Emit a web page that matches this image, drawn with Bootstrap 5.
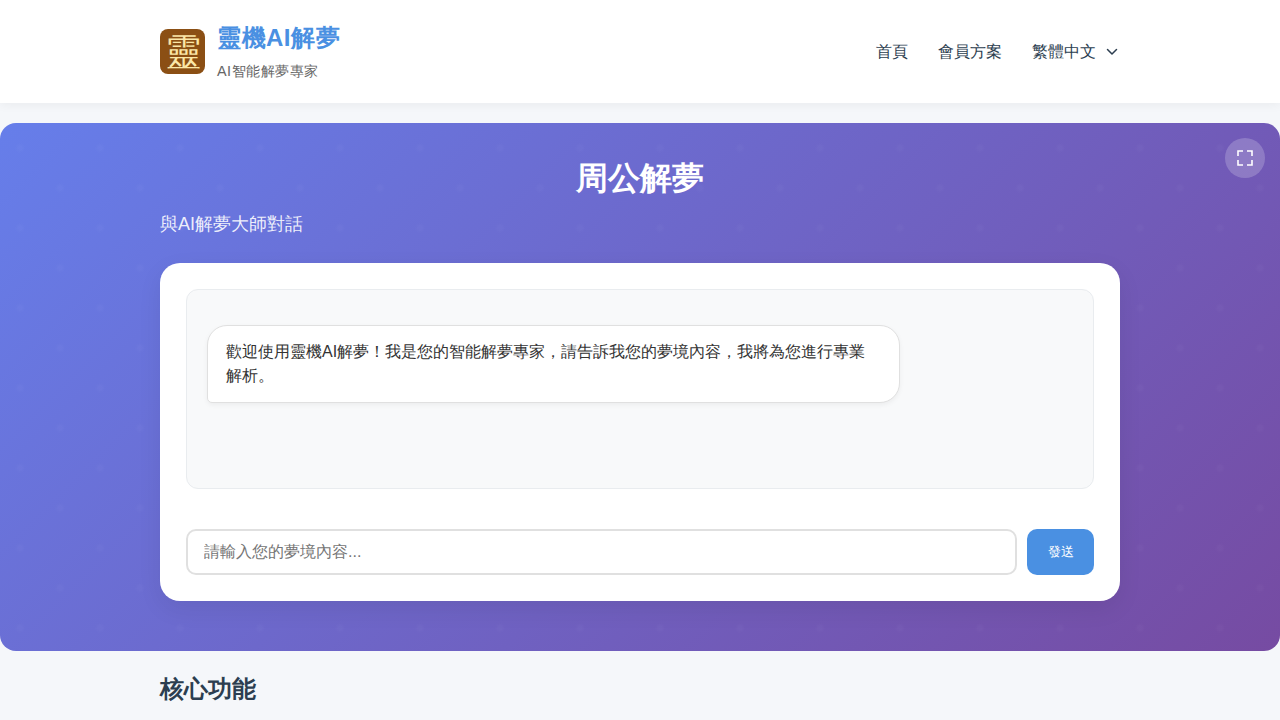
<!DOCTYPE html>
<html lang="zh-Hant">

<head>
    <meta charset="UTF-8" />
    <meta name="viewport" content="width=device-width, initial-scale=1.0" />
    <title>靈機AI解夢</title>
    <link href="https://cdn.jsdelivr.net/npm/bootstrap@5.3.0/dist/css/bootstrap.min.css" rel="stylesheet" />
    <style>
        body {
            background-color: #f5f7fa;
            color: #333333;
            font-family: "Liberation Sans", sans-serif;
            height: 720px;
            overflow: hidden;
        }

        .page-wrap {
            width: 960px;
            margin: 0 auto;
        }

        .site-header {
            height: 103px;
            background-color: #ffffff;
            box-shadow: 0 2px 10px rgba(0, 0, 0, 0.05);
            margin-bottom: 20px;
        }

        .logo-box {
            width: 45px;
            height: 45px;
            border-radius: 8px;
            background-color: #8b4f14;
            color: #fbe7a8;
            font-size: 36px;
            line-height: 45px;
            text-align: center;
        }

        .brand-text {
            padding-bottom: 2px;
        }

        .brand-name {
            color: #4a90e2;
            font-size: 24px;
            font-weight: 700;
            line-height: 36px;
            letter-spacing: 0.5px;
            margin-bottom: 4px;
        }

        .brand-sub {
            color: #666666;
            font-size: 14.4px;
            line-height: 22px;
            letter-spacing: 0.5px;
        }

        .top-link {
            color: #2c3e50;
            font-size: 16px;
            text-decoration: none;
        }

        .top-gap {
            margin-left: 30px;
        }

        .hero-panel {
            position: relative;
            height: 528px;
            border-radius: 16px;
            background-image:
                radial-gradient(circle at 20px 25px, rgba(255, 255, 255, 0.025) 0, rgba(255, 255, 255, 0.025) 2px, transparent 5px),
                radial-gradient(circle at 60px 65px, rgba(255, 255, 255, 0.025) 0, rgba(255, 255, 255, 0.025) 2px, transparent 5px),
                linear-gradient(135deg, #667eea 0%, #764ba2 100%);
            background-size: 80px 80px, 80px 80px, 100% 100%;
            padding-top: 32px;
            color: #ffffff;
        }

        .expand-btn {
            position: absolute;
            top: 15px;
            right: 15px;
            width: 40px;
            height: 40px;
            border: 0;
            border-radius: 50%;
            background-color: rgba(255, 255, 255, 0.2);
        }

        .hero-title {
            font-size: 32px;
            font-weight: 700;
            line-height: 46px;
            margin-bottom: 10px;
        }

        .hero-sub {
            font-size: 18px;
            line-height: 26px;
            color: rgba(255, 255, 255, 0.9);
            margin-bottom: 26px;
        }

        .chat-card {
            height: 338px;
            background-color: #ffffff;
            border-radius: 20px;
            padding: 26px;
            box-shadow: 0 8px 24px rgba(0, 0, 0, 0.07);
        }

        .chat-log {
            height: 200px;
            background-color: #f8f9fa;
            border: 1px solid #e9ecef;
            border-radius: 12px;
            padding: 35px 20px;
            margin-bottom: 40px;
        }

        .bot-bubble {
            width: 693px;
            height: 78px;
            background-color: #ffffff;
            color: #333333;
            border: 1px solid #e0e0e0;
            border-radius: 20px 20px 20px 5px;
            padding: 14px 18px;
            font-size: 16px;
            line-height: 24px;
            box-shadow: 0 2px 5px rgba(0, 0, 0, 0.05);
        }

        .dream-input {
            height: 46px;
            border: 2px solid #e0e0e0;
            border-radius: 10px;
            padding: 0 16px;
            font-size: 16px;
        }

        .dream-input::placeholder {
            color: #757575;
        }

        .send-btn {
            width: 67px;
            height: 46px;
            flex-shrink: 0;
            background-color: #4a90e2;
            color: #ffffff;
            border: 0;
            border-radius: 10px;
            font-size: 13.33px;
        }

        .send-row {
            gap: 10px;
        }

        .section-title {
            color: #2c3e50;
            font-size: 24px;
            font-weight: 700;
            line-height: 36px;
            margin-top: 20px;
        }
    </style>
</head>

<body>
    <header class="site-header d-flex align-items-center">
        <div class="page-wrap d-flex justify-content-between align-items-center">
            <div class="d-flex align-items-center gap-2">
                <div class="logo-box">靈</div>
                <div class="brand-text ms-1">
                    <div class="brand-name">靈機AI解夢</div>
                    <div class="brand-sub">AI智能解夢專家</div>
                </div>
            </div>
            <nav class="d-flex align-items-center">
                <a class="top-link" href="#">首頁</a>
                <a class="top-link top-gap" href="#">會員方案</a>
                <a class="top-link top-gap d-flex align-items-center" href="#">繁體中文
                    <svg class="ms-2" width="16" height="16" viewBox="0 0 16 16" fill="none" stroke="#2c3e50" stroke-width="1.5" stroke-linecap="round" stroke-linejoin="round">
                        <path d="M3.5 5.5 8 10l4.5-4.5" />
                    </svg>
                </a>
            </nav>
        </div>
    </header>

    <main>
        <section class="hero-panel">
            <button class="expand-btn d-flex align-items-center justify-content-center" type="button" aria-label="全螢幕">
                <svg width="16" height="16" viewBox="0 0 16 16" fill="none" stroke="#ffffff" stroke-width="1.6">
                    <path d="M1 6V1h5M10 1h5v5M15 10v5h-5M6 15H1v-5" />
                </svg>
            </button>
            <div class="page-wrap">
                <h1 class="hero-title text-center">周公解夢</h1>
                <p class="hero-sub">與AI解夢大師對話</p>
                <div class="chat-card">
                    <div class="chat-log">
                        <div class="bot-bubble">歡迎使用靈機AI解夢！我是您的智能解夢專家，請告訴我您的夢境內容，我將為您進行專業解析。</div>
                    </div>
                    <div class="d-flex send-row">
                        <input class="form-control dream-input" type="text" placeholder="請輸入您的夢境內容...">
                        <button class="send-btn" type="button">發送</button>
                    </div>
                </div>
            </div>
        </section>

        <div class="page-wrap">
            <h2 class="section-title">核心功能</h2>
        </div>
    </main>

    <script src="https://cdn.jsdelivr.net/npm/bootstrap@5.3.0/dist/js/bootstrap.bundle.min.js"></script>
</body>

</html>
